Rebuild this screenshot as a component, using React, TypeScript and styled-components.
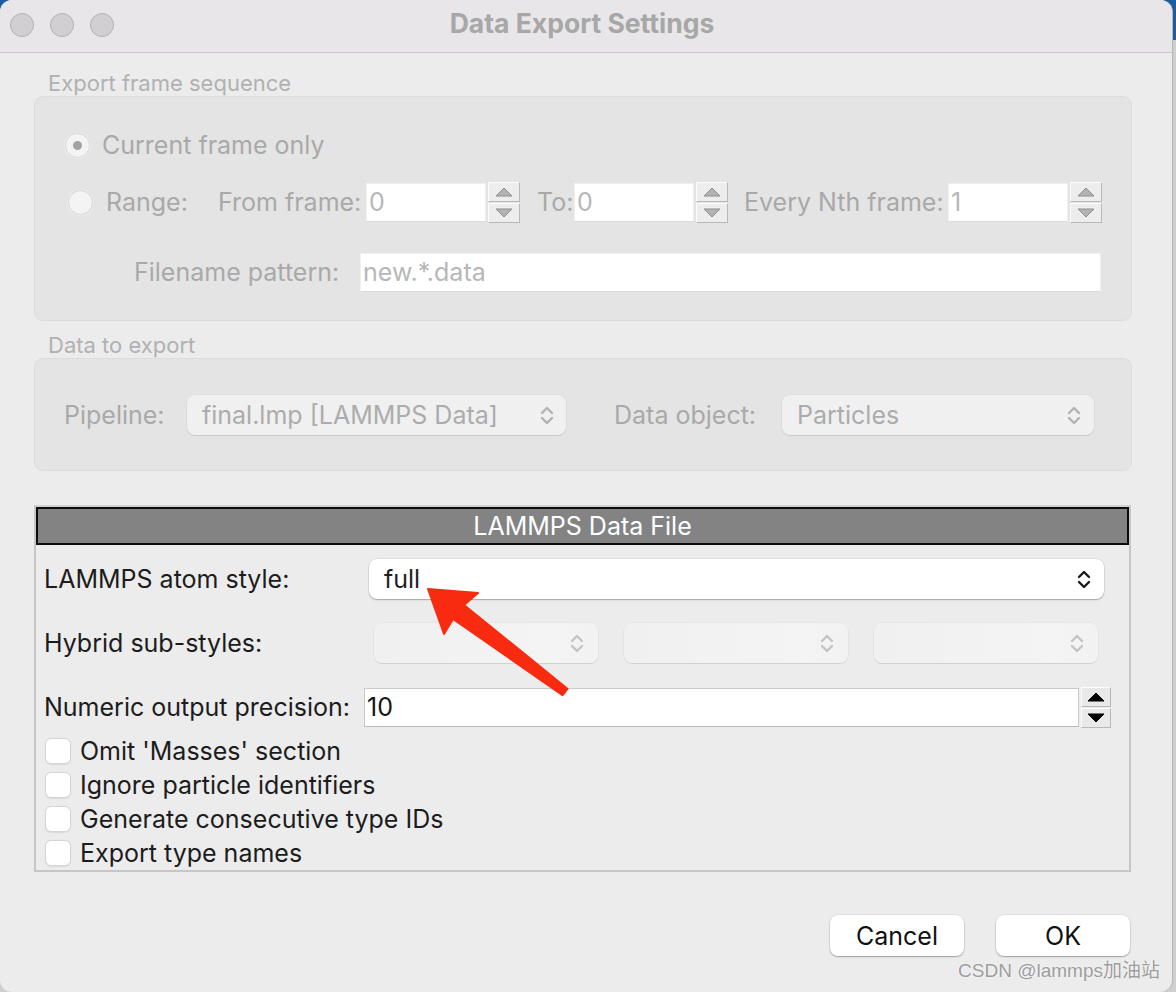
import styled, { createGlobalStyle } from 'styled-components';

const GlobalStyle = createGlobalStyle`
  html, body {
    margin: 0;
    padding: 0;
  }
  body {
    background: linear-gradient(180deg, #1d5ea3 0, #1d5ea3 40px, #cfcfcf 40px);
    font-family: Inter, 'Noto Sans', sans-serif;
  }
`;

const Screen = styled.div`
  width: 1176px;
  height: 992px;
  overflow: hidden;
`;

const Window = styled.div`
  position: relative;
  width: 1172px;
  height: 992px;
  background: #ececec;
  border-radius: 12px;
  box-shadow: 1px 0 0 #b9b9b9;
  display: flex;
  flex-direction: column;
  overflow: hidden;
`;

const TitleBar = styled.div`
  height: 52px;
  flex: none;
  display: grid;
  grid-template-columns: 1fr auto 1fr;
  align-items: center;
  background: #e8e6e8;
  border-bottom: 1px solid #c8c6c8;
`;

const Lights = styled.div`
  display: flex;
  gap: 16px;
  padding-left: 10px;
  margin-top: -2px;
`;

const Light = styled.span`
  width: 24px;
  height: 24px;
  box-sizing: border-box;
  border-radius: 50%;
  background: #d1cfd1;
  border: 1px solid #b3b1b3;
`;

const Title = styled.div`
  font-size: 26.5px;
  line-height: 30px;
  font-weight: 700;
  color: #a7a7a7;
  margin: 0 8px 6px 0;
`;

const Content = styled.div`
  padding: 17px 40px 0 34px;
  display: flex;
  flex-direction: column;
`;

const GroupTitle = styled.div<{ $top?: number }>`
  height: 26px;
  line-height: 26px;
  padding-left: 14px;
  margin-top: ${(p) => p.$top ?? 0}px;
  font-size: 22px;
  color: #b1b1b1;
`;

const GroupBox = styled.div<{ $pad: string }>`
  box-sizing: border-box;
  padding: ${(p) => p.$pad};
  background: #e4e4e4;
  border: 1px solid #dcdcdc;
  border-radius: 9px;
  display: flex;
  flex-direction: column;
`;

const Row = styled.div<{ $top?: number; $left?: number; $right?: number }>`
  display: flex;
  align-items: center;
  height: 40px;
  margin-top: ${(p) => p.$top ?? 0}px;
  padding-left: ${(p) => p.$left ?? 0}px;
  margin-right: ${(p) => p.$right ?? 0}px;
`;

const Text = styled.span<{ $w?: number; $muted?: boolean }>`
  flex: none;
  width: ${(p) => (p.$w ? `${p.$w}px` : 'auto')};
  font-size: 25px;
  white-space: nowrap;
  color: ${(p) => (p.$muted ? '#a9a9a9' : '#1c1c1c')};
`;

const Radio = styled.span<{ $checked?: boolean; $gap: number }>`
  flex: none;
  width: 25px;
  height: 25px;
  box-sizing: border-box;
  margin-right: ${(p) => p.$gap}px;
  border-radius: 50%;
  background: #f4f4f4;
  border: 1px solid #d6d6d6;
  box-shadow: 0 0 0 1px #ebebeb;
  display: flex;
  align-items: center;
  justify-content: center;
  &::after {
    content: '';
    display: ${(p) => (p.$checked ? 'block' : 'none')};
    width: 9px;
    height: 9px;
    border-radius: 50%;
    background: #a3a3a3;
  }
`;

const Field = styled.div<{ $w?: number; $muted?: boolean }>`
  box-sizing: border-box;
  height: 39px;
  width: ${(p) => (p.$w ? `${p.$w}px` : 'auto')};
  flex: ${(p) => (p.$w ? 'none' : '1')};
  padding-left: 2px;
  display: flex;
  align-items: center;
  background: #fff;
  font-size: 25px;
  color: ${(p) => (p.$muted ? '#b7b7b7' : '#161616')};
  border: 1px solid ${(p) => (p.$muted ? '#f0f0f0' : '#c9c9c9')};
  border-bottom-color: ${(p) => (p.$muted ? '#dadada' : '#b9b9b9')};
`;

const SpinBox = styled.div<{ $left?: number }>`
  flex: none;
  display: flex;
  flex-direction: column;
  gap: 1px;
  margin-left: 2px;
  margin-right: ${(p) => p.$left ?? 0}px;
`;

const SpinButton = styled.div<{ $w: number; $active?: boolean }>`
  width: ${(p) => p.$w}px;
  height: 20px;
  box-sizing: border-box;
  display: flex;
  align-items: center;
  justify-content: center;
  background: ${(p) => (p.$active ? '#e9e9e9' : '#ededed')};
  border: 1px solid;
  border-color: #fcfcfc #b8b8b8 #b8b8b8 #fcfcfc;
`;

const Combo = styled.div<{ $tone: 'active' | 'muted' | 'blank'; $w?: number; $pr: number }>`
  box-sizing: border-box;
  height: 40px;
  width: ${(p) => (p.$w ? `${p.$w}px` : 'auto')};
  flex: ${(p) => (p.$w ? 'none' : '1')};
  padding: 0 ${(p) => p.$pr}px 0 15px;
  display: flex;
  align-items: center;
  justify-content: space-between;
  border-radius: 8px;
  font-size: 25px;
  color: ${(p) => (p.$tone === 'active' ? '#1e1e1e' : '#acacac')};
  background: ${(p) =>
    p.$tone === 'active'
      ? '#ffffff'
      : p.$tone === 'muted'
        ? '#f0f0f0'
        : 'linear-gradient(90deg, #f0f0f0, #f4f4f4 80%, #f2f2f2)'};
  box-shadow: ${(p) =>
    p.$tone === 'active'
      ? '0 1px 1.5px rgba(0,0,0,0.28), 0 0 0 0.5px rgba(0,0,0,0.1)'
      : '0 1px 1px rgba(0,0,0,0.1), 0 0 0 0.5px rgba(0,0,0,0.05)'};
`;

const Panel = styled.div`
  margin-top: 34px;
  margin-right: 1px;
  border: 2px solid #c6c6c6;
  border-top-color: #d2d2d2;
  display: flex;
  flex-direction: column;
`;

const PanelHeader = styled.div`
  height: 38px;
  box-sizing: border-box;
  border: 2px solid #0c0c0c;
  background: #838383;
  color: #ffffff;
  font-size: 25px;
  display: flex;
  align-items: center;
  justify-content: center;
`;

const PanelBody = styled.div`
  padding: 14px 25px 0 8px;
  display: flex;
  flex-direction: column;
`;

const Hybrids = styled.div`
  display: flex;
  gap: 26px;
`;

const Checks = styled.div`
  margin-top: 7px;
  display: flex;
  flex-direction: column;
`;

const CheckRow = styled.label`
  height: 34px;
  display: flex;
  align-items: center;
  gap: 9px;
  padding-left: 1px;
  font-size: 25px;
  color: #1c1c1c;
`;

const CheckBox = styled.span`
  width: 26px;
  height: 26px;
  box-sizing: border-box;
  border-radius: 6px;
  background: #ffffff;
  border: 1px solid #d5d5d5;
  box-shadow: 0 0.5px 1px rgba(0, 0, 0, 0.08);
`;

const ButtonBar = styled.div`
  margin-top: 43px;
  margin-right: 2px;
  display: flex;
  justify-content: flex-end;
  gap: 32px;
`;

const DialogButton = styled.button`
  width: 134px;
  height: 41px;
  border: none;
  border-radius: 8px;
  background: #ffffff;
  box-shadow: 0 1px 1.5px rgba(0, 0, 0, 0.3), 0 0 0 0.5px rgba(0, 0, 0, 0.1);
  font-family: Inter, 'Noto Sans', sans-serif;
  font-size: 25px;
  color: #111111;
  padding: 0;
`;

const Watermark = styled.div`
  position: absolute;
  right: 12px;
  bottom: 10px;
  font-family: 'Liberation Sans', 'Noto Sans CJK SC', sans-serif;
  font-size: 19px;
  color: #9d9d9d;
  text-shadow: 0 0 2px #ffffff;
`;

const ArrowMark = styled.svg`
  position: absolute;
  left: 420px;
  top: 580px;
  pointer-events: none;
`;

const Chevrons = ({ color }: { color: string }) => (
  <svg width="14" height="21" viewBox="0 0 14 21">
    <path
      d="M2 8 L7 3 L12 8 M2 13 L7 18 L12 13"
      fill="none"
      stroke={color}
      strokeWidth="2.4"
      strokeLinecap="round"
      strokeLinejoin="round"
    />
  </svg>
);

const Tri = ({ up, active }: { up?: boolean; active?: boolean }) => (
  <svg width="18" height="10" viewBox="0 0 18 10">
    <polygon
      points={up ? '1,9 9,1 17,9' : '1,1 9,9 17,1'}
      fill={active ? '#000000' : '#b3b3b3'}
      stroke={active ? '#000000' : '#8e8e8e'}
      strokeWidth="1"
    />
  </svg>
);

const Spinner = ({ active, w = 32, after }: { active?: boolean; w?: number; after?: number }) => (
  <SpinBox $left={after}>
    <SpinButton $w={w} $active={active}>
      <Tri up active={active} />
    </SpinButton>
    <SpinButton $w={w} $active={active}>
      <Tri active={active} />
    </SpinButton>
  </SpinBox>
);

const checks = [
  "Omit 'Masses' section",
  'Ignore particle identifiers',
  'Generate consecutive type IDs',
  'Export type names',
];

const App = () => {
  return (
    <Screen>
      <GlobalStyle />
      <Window>
        <TitleBar>
          <Lights>
            <Light />
            <Light />
            <Light />
          </Lights>
          <Title>Data Export Settings</Title>
          <span />
        </TitleBar>

        <Content>
          <GroupTitle>Export frame sequence</GroupTitle>
          <GroupBox $pad="28px 30px 28px 0">
            <Row $left={30}>
              <Radio $checked $gap={12} />
              <Text $muted>Current frame only</Text>
            </Row>
            <Row $top={17} $left={33}>
              <Radio $gap={13} />
              <Text $muted $w={112}>
                Range:
              </Text>
              <Text $muted $w={148}>
                From frame:
              </Text>
              <Field $muted $w={120}>
                0
              </Field>
              <Spinner after={17} />
              <Text $muted $w={37}>
                To:
              </Text>
              <Field $muted $w={120}>
                0
              </Field>
              <Spinner after={16} />
              <Text $muted $w={204}>
                Every Nth frame:
              </Text>
              <Field $muted $w={120}>
                1
              </Field>
              <Spinner />
            </Row>
            <Row $top={30} $left={99}>
              <Text $muted $w={226}>
                Filename pattern:
              </Text>
              <Field $muted>new.*.data</Field>
            </Row>
          </GroupBox>

          <GroupTitle $top={11}>Data to export</GroupTitle>
          <GroupBox $pad="36px 37px 35px 0">
            <Row $left={29}>
              <Text $muted $w={123}>
                Pipeline:
              </Text>
              <Combo $tone="muted" $w={379} $pr={12}>
                <span>final.lmp [LAMMPS Data]</span>
                <Chevrons color="#b2b2b2" />
              </Combo>
              <Text $muted $w={168} style={{ marginLeft: 48 }}>
                Data object:
              </Text>
              <Combo $tone="muted" $pr={13}>
                <span>Particles</span>
                <Chevrons color="#b2b2b2" />
              </Combo>
            </Row>
          </GroupBox>

          <Panel>
            <PanelHeader>LAMMPS Data File</PanelHeader>
            <PanelBody>
              <Row>
                <Text $w={325}>LAMMPS atom style:</Text>
                <Combo $tone="active" $pr={13}>
                  <span>full</span>
                  <Chevrons color="#1a1a1a" />
                </Combo>
              </Row>
              <Row $top={24}>
                <Text $w={330}>Hybrid sub-styles:</Text>
                <Hybrids>
                  <Combo $tone="blank" $w={224} $pr={14}>
                    <span />
                    <Chevrons color="#c4c4c4" />
                  </Combo>
                  <Combo $tone="blank" $w={224} $pr={14}>
                    <span />
                    <Chevrons color="#c4c4c4" />
                  </Combo>
                  <Combo $tone="blank" $w={224} $pr={14}>
                    <span />
                    <Chevrons color="#c4c4c4" />
                  </Combo>
                </Hybrids>
              </Row>
              <Row $top={24} $right={-7}>
                <Text $w={320}>Numeric output precision:</Text>
                <Field>10</Field>
                <Spinner active w={30} />
              </Row>
              <Checks>
                {checks.map((c) => (
                  <CheckRow key={c}>
                    <CheckBox />
                    {c}
                  </CheckRow>
                ))}
              </Checks>
            </PanelBody>
          </Panel>

          <ButtonBar>
            <DialogButton>Cancel</DialogButton>
            <DialogButton>OK</DialogButton>
          </ButtonBar>
        </Content>

        <ArrowMark width="160" height="125" viewBox="0 0 160 125">
          <polygon
            points="8,9 58,13 44,25 147.4,108.8 142.6,115.2 33,39 24,54"
            fill="#f82b10"
            stroke="#f82b10"
            strokeWidth="2"
            strokeLinejoin="round"
          />
        </ArrowMark>

        <Watermark>CSDN @lammps加油站</Watermark>
      </Window>
    </Screen>
  );
};

export default App;
